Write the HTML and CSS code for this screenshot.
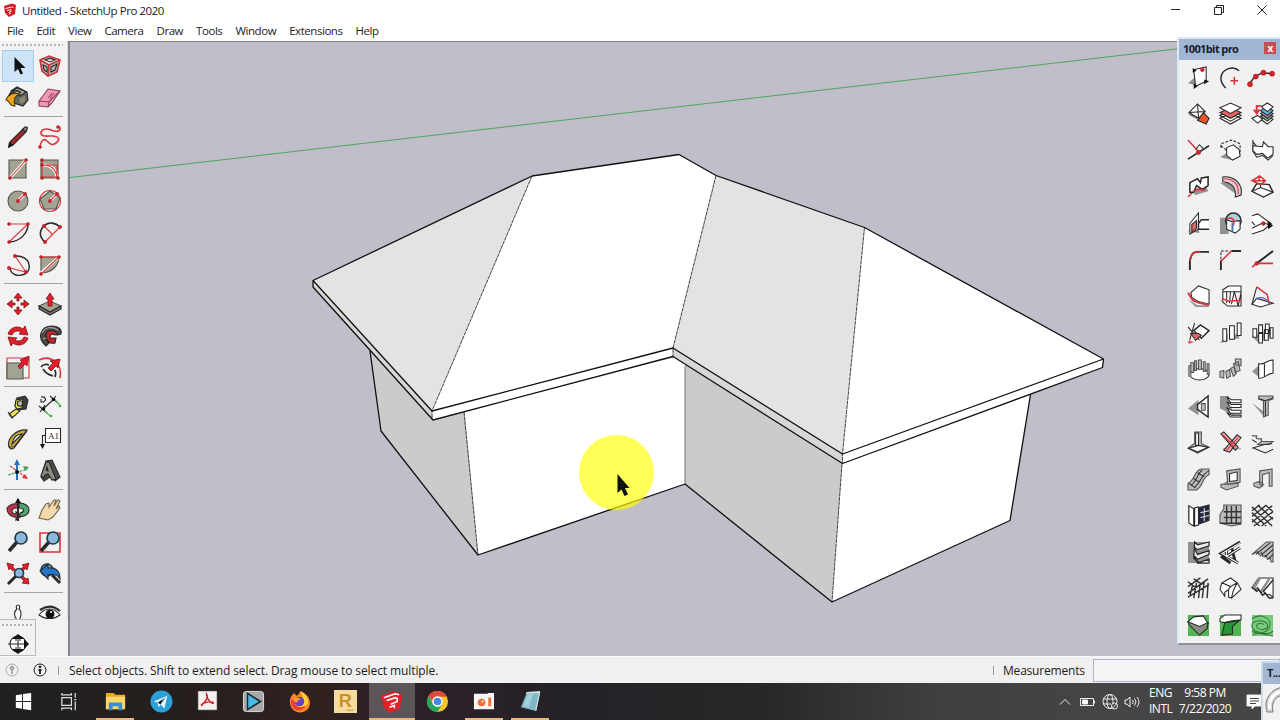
FILE: index.html
```html
<!DOCTYPE html>
<html lang="en">

<head>
  <meta charset="UTF-8">
  <meta name="viewport" content="width=device-width, initial-scale=1.0">
  <title>Untitled - SketchUp Pro 2020</title>
  <link rel="stylesheet" href="styles.css">
</head>

<body>
  <header class="titlebar">
    <svg class="app-logo" viewBox="0 0 14 14"><path fill="#d9161c" d="M1 3L9 .5 13 2l-1 9-6 3-4-4z"/><path fill="none" stroke="#fff" d="M2.500 5.500l6-1.500 2 .5M4 7.500l4-1v2L5.500 9.500M6 11l2-.7"/></svg>
    <span class="title">Untitled - SketchUp Pro 2020</span>
    <div class="window-buttons">
      <svg viewBox="0 0 12 12"><path d="M1 5.500h9"/></svg>
      <svg viewBox="0 0 12 12"><path d="M1.500 3.500h7v7h-7zM3.500 3.500v-2h7v7h-2"/></svg>
      <svg viewBox="0 0 12 12"><path d="M1.500 1.500l9 9M10.500 1.500l-9 9"/></svg>
    </div>
  </header>

  <nav class="menubar">
    <span>File</span>
    <span>Edit</span>
    <span>View</span>
    <span>Camera</span>
    <span>Draw</span>
    <span>Tools</span>
    <span>Window</span>
    <span>Extensions</span>
    <span>Help</span>
  </nav>

  <main class="workspace">
    <aside class="sidebar">
      <div class="toolbar">
        <div class="grip"></div>
        <div class="tools">
          <div class="tool selected"><svg viewBox="0 0 24 24"><path class="solid" d="M8.500 3v15l3.500-3 2.500 5.500 2.500-1-2.500-5.500h5z"/></svg></div>
          <div class="tool"><svg viewBox="0 0 24 24"><path fill="#b9b2ae" stroke="#c8343c" stroke-width="1.600" d="M2 6l9-4 11 4-3 12-9 4-6-5zM2 6l9 5 11-5M11 11l-1 11"/><path d="M7 6l5-2 5 2-5 2zM5 11l4 2v5l-3-2zM13 13l6-3-2 6-4 2z"/></svg></div>
          <div class="tool"><svg viewBox="0 0 24 24"><path fill="#5d6964" d="M5 5l6-4 10 5 1 8-5 6-9-3z"/><path fill="#aeb7ae" d="M6 5l5-3 9 4-6 4z"/><path fill="#98866c" stroke="none" d="M13 13l6-3v5l-4 3z"/><path fill="#f0a51c" stroke="#4a3a14" d="M0 14C2 8 8 6 14 8c-6 2-7 6-5 12C3 21 4 14 0 14z"/><path stroke-width="1.600" d="M3 10c2-6 8-7 12-3"/></svg></div>
          <div class="tool"><svg viewBox="0 0 24 24"><path fill="#f09ab5" stroke="#8a4058" d="M1 15L10 3l12 2-8 12-4 4-9-1z"/><path stroke="#8a4058" d="M1 15l10 1L22 5M11 16l-1 5"/><path stroke="#b3436c" d="M10 12l4-5M12 13l4-6"/></svg></div>
        </div>
        <hr>
        <div class="tools">
          <div class="tool"><svg viewBox="0 0 24 24"><path fill="#a9232a" d="M4 17L17 4l4-1-1 4L7 20l-4 2z"/><path class="solid" d="M3 17l4 3-5 3z"/><path fill="#888" d="M17 4l2-2h2v3l-2 2z"/></svg></div>
          <div class="tool"><svg viewBox="0 0 24 24"><path class="red thick" d="M2 22C3 15 6 13 9 16s5 5 9 2 4-6-3-7C8 11 3 12 3 8s6-5 10-3 9 2 9-1-1-2-2-2"/><circle class="dot" cx="2" cy="22" r="1.500"/><circle class="dot" cx="20" cy="2" r="1.500"/></svg></div>
          <div class="tool"><svg viewBox="0 0 24 24"><path class="olive" d="M3 3h17v18H3z"/><path class="halo" d="M4 21L20 3"/><path class="red" d="M4 21L20 3"/><circle class="dot" cx="4" cy="21" r="1.500"/><circle class="dot" cx="20" cy="3" r="1.500"/></svg></div>
          <div class="tool"><svg viewBox="0 0 24 24"><path class="olive" d="M3 3h17v18H3z"/><path class="halo" d="M4 8c10 0 14 5 15 12"/><path class="red" d="M4 3v17h16M4 8c10 0 14 5 15 12V8H4"/><circle class="dot" cx="4" cy="3" r="1.500"/><circle class="dot" cx="4" cy="8" r="1.500"/><circle class="dot" cx="4" cy="21" r="1.500"/><circle class="dot" cx="20" cy="21" r="1.500"/></svg></div>
          <div class="tool"><svg viewBox="0 0 24 24"><circle class="olive" cx="12" cy="12" r="10"/><path class="halo" d="M12 12l7-7"/><path class="red" d="M12 12l7-7"/><circle class="dot" cx="12" cy="12" r="1.700"/><circle class="dot" cx="19" cy="5" r="1.700"/></svg></div>
          <div class="tool"><svg viewBox="0 0 24 24"><circle class="red" cx="12" cy="12" r="10.500"/><path class="olive" d="M2 10L12 2l10 7-4 11H6z"/><path class="halo" d="M12 12l7-7"/><path class="red" d="M12 12l7-7"/><circle class="dot" cx="12" cy="12" r="1.700"/><circle class="dot" cx="19" cy="5" r="1.700"/></svg></div>
          <div class="tool"><svg viewBox="0 0 24 24"><path stroke-width="1.400" d="M22 3c0 9-8 18-19 18"/><path class="red" d="M3 3h19L3 21"/><circle class="dot" cx="3" cy="3" r="1.500"/><circle class="dot" cx="22" cy="3" r="1.500"/><circle class="dot" cx="3" cy="21" r="1.500"/></svg></div>
          <div class="tool"><svg viewBox="0 0 24 24"><path stroke-width="1.600" d="M7 21C1 16 1 10 6 5s12-3 16 1"/><path class="red" d="M6 5l8 8M7 21L22 6"/><circle class="dot" cx="6" cy="5" r="1.700"/><circle class="dot" cx="22" cy="6" r="1.700"/><circle class="dot" cx="7" cy="21" r="1.700"/></svg></div>
          <div class="tool"><svg viewBox="0 0 24 24"><path stroke-width="1.400" d="M9 3c15-1 18 14 10 18-7 3-14 1-15-6"/><path class="red" d="M9 3l11 16-16-4"/><circle class="dot" cx="9" cy="3" r="1.700"/><circle class="dot" cx="20" cy="19" r="1.700"/><circle class="dot" cx="3" cy="15" r="1.700"/></svg></div>
          <div class="tool"><svg viewBox="0 0 24 24"><path class="olive" d="M3 4h18c0 8-7 16-18 16z"/><path class="halo" d="M3 20L21 4"/><path class="red" d="M3 4h18L3 21"/><circle class="dot" cx="3" cy="4" r="1.500"/><circle class="dot" cx="21" cy="4" r="1.500"/><circle class="dot" cx="3" cy="21" r="1.500"/></svg></div>
        </div>
        <hr>
        <div class="tools">
          <div class="tool"><svg viewBox="0 0 24 24"><path class="arrow" d="M12 1l4 5h-3v3h-2V6H8zM12 23l-4-5h3v-3h2v3h3zM1 12l5-4v3h3v2H6v3zM23 12l-5 4v-3h-3v-2h3V8z"/></svg></div>
          <div class="tool"><svg viewBox="0 0 24 24"><path class="olive" d="M1 14l11-5 11 5-11 6z"/><path fill="#77786b" d="M1 14v3l11 6 11-6v-3l-11 6z"/><path class="arrow" d="M12 1l4 6h-2v7h-4V7H8z"/></svg></div>
          <div class="tool"><svg viewBox="0 0 24 24"><path class="arrow" d="M2 10C4 3 12 1 17 5l2-3 3 9-9-1 2-2C11 6 8 7 6 11zM22 14c-2 7-10 9-15 5l-2 3-3-9 9 1-2 2c4 2 7 1 9-3z"/></svg></div>
          <div class="tool"><svg viewBox="0 0 24 24"><path fill="#4b4c49" d="M8 22C-2 13 3 2 14 2c7 0 10 4 9 8l-4 1c-1-4-5-5-9-3-4 3-3 8 1 11z"/><path fill="#c4232a" d="M8 13C7 8 11 5 17 7l3 3-3 1c-4-2-5 0-5 3l6 0-1 5c-5 1-8-2-9-6z"/><path stroke="#aaa" d="M4 9c3-6 10-7 16-3M5 15l3-1"/></svg></div>
          <div class="tool"><svg viewBox="0 0 24 24"><path class="red" d="M1 2h22v20H1z"/><path class="olive" d="M1 7h16v16H1z"/><path class="arrow" d="M12 10l4-4-2-2 9-4-2 10-2-2-5 5z"/></svg></div>
          <div class="tool"><svg viewBox="0 0 24 24"><path class="red thick" d="M1 4C13-2 25 8 22 22"/><path stroke-width="1.600" d="M3 11c2-3 6-3 8-2M17 14c1 2 1 4 0 7M5 13c3 5 6 6 10 7"/><path class="arrow" d="M10 12l5-5-3-2 10-2-2 9-2-2-5 5z"/></svg></div>
        </div>
        <hr>
        <div class="tools">
          <div class="tool"><svg viewBox="0 0 24 24"><path fill="#3d3e3b" d="M11 3l8-2 3 4-2 9-8 1-3-4z"/><path fill="#f2e44c" d="M10 5l7-1-1 9-5 1-2-3zM10 14l-7 5 3 4 8-7z"/><circle fill="#b9b9b9" cx="14" cy="8.500" r="2.700"/><path d="M2 17l5 6"/></svg></div>
          <div class="tool"><svg viewBox="0 0 24 24"><path d="M5 14L16 4M12 1l8 7M1 11l8 7M18 1l-5 6M7 10l-5 7M3 2c5-1 6 4 2 5M3 4v3h3"/><path stroke="#58b958" d="M16 4l6 6M5 14l7 7"/><circle class="solid" cx="15.500" cy="4.500" r="1.800"/><circle class="solid" cx="5.500" cy="14" r="1.800"/><circle class="green-dot" cx="22" cy="11" r="1.300"/><circle class="green-dot" cx="13" cy="21" r="1.300"/></svg></div>
          <div class="tool"><svg viewBox="0 0 24 24"><path fill="#c5aa37" fill-rule="evenodd" d="M3 20C0 11 11 2 21 3L8 20zm3-3l10-10C10 7 7 12 6 17z"/><path d="M3 20l2 2 3-1L21 4"/></svg></div>
          <div class="tool"><svg viewBox="0 0 24 24"><path fill="#fff" d="M7.500 1.500h15v14h-15z"/><path d="M7.500 8.500h-3v9"/><path class="solid" d="M2 17h5l-2.500 5z"/><text x="10" y="12">A1</text></svg></div>
          <div class="tool"><svg viewBox="0 0 24 24"><path stroke="#d43b35" stroke-dasharray="3 1" d="M4 7l17 12"/><path stroke="#42a557" stroke-dasharray="3 1" d="M2 16l20-6"/><path stroke="#2873b8" stroke-width="2" stroke-dasharray="8 2" d="M11 3v19"/><path fill="#2873b8" stroke="none" d="M8 6l3-6 3 6z"/><path fill="#42a557" stroke="none" d="M17 7l6 1-4 4z"/><path fill="#d43b35" stroke="none" d="M16 19l6 1-3-5z"/><circle class="solid" cx="11" cy="13" r="2"/></svg></div>
          <div class="tool"><svg viewBox="0 0 24 24"><path fill="#4c4d48" d="M3 18L8 2l6-1 8 17-5 4-4-5-4 3-3 2z"/><path fill="#8b8b81" fill-rule="evenodd" d="M3 17L8 3h3l7 17-4 1-4-6-3 1-1 3zM8 11l2 1-1-4z"/></svg></div>
        </div>
        <hr>
        <div class="tools">
          <div class="tool"><svg viewBox="0 0 24 24"><path fill="#bc3448" d="M1 10c3-4 6-5 11-4v4c-4 0-6 1-6 3s2 3 4 3v-2l5 4-5 4v-3C4 19 1 15 1 10z"/><path fill="#51a574" d="M13 5c6 0 10 3 10 7 0 3-3 6-9 7v-4c5-1 5-5-1-5z"/><path stroke-width="2" d="M12 1v22"/><path class="solid" d="M9 5l3-5 3 5z"/></svg></div>
          <div class="tool"><svg viewBox="0 0 24 24"><path fill="#f4d9aa" stroke="#75664b" d="M1 20l3-8 4-6 3-1 0 4 5-7 2 0-2 6 4-6 2 1-4 8 3-3 1 2-7 9-5 3z"/></svg></div>
          <div class="tool"><svg viewBox="0 0 24 24"><path stroke-width="3.500" d="M3 21l8-9"/><circle class="lens" cx="15" cy="8" r="6"/></svg></div>
          <div class="tool"><svg viewBox="0 0 24 24"><path class="red thick" d="M2 3h20v19H2z"/><path stroke-width="3.500" d="M3 21l8-9"/><circle class="lens" cx="15" cy="8" r="6"/></svg></div>
          <div class="tool"><svg viewBox="0 0 24 24"><path class="arrow" d="M1 1l7 2-2 1 3 3-2 2-3-3-1 2zM23 1l-7 2 2 1-3 3 2 2 3-3 1 2zM23 22l-7-1 2-2-3-3 2-2 3 3 2-1z"/><path stroke-width="3" d="M2 22l8-8"/><circle class="lens" cx="13" cy="11" r="4.500"/></svg></div>
          <div class="tool"><svg viewBox="0 0 24 24"><circle class="lens" cx="9" cy="8" r="6"/><path stroke-width="3" d="M14 13l8 8"/><path fill="#2477c8" d="M2 9l8-7v4c8-1 12 3 12 11-3-5-7-5-12-4v4z"/></svg></div>
        </div>
        <hr>
        <div class="tools">
          <div class="tool"><svg viewBox="0 0 24 24"><path fill="#fff" d="M12 4c2 0 2 3 1 4 3 2 2 7 1 9v5h-4v-5c-2-2-2-7 1-9-1-1-1-4 1-4z"/></svg></div>
          <div class="tool"><svg viewBox="0 0 24 24"><path fill="#fff" d="M1 14c6-8 15-8 21 0-7 5-14 5-21 0z"/><circle class="solid" cx="12" cy="13" r="4.500"/><path stroke-width="2.200" d="M2 9c7-5 13-5 20 1"/><circle fill="#fff" stroke="none" cx="13" cy="11" r="1"/></svg></div>
        </div>
      </div>
      <div class="toolbar section-toolbar">
        <div class="grip"></div>
        <div class="tool"><svg viewBox="0 0 24 24"><circle fill="#fff" cx="12" cy="12" r="8"/><path d="M2 12h20M12 4v16M9 8h2M13 8h2M9 16h2M13 16h2"/><path class="solid" d="M12 2l6 5H6zM12 22l6-5H6zM18 7l5 5-5 5z"/></svg></div>
      </div>
    </aside>

    <section class="viewport">
      <svg class="model" viewBox="70 42 1210 614">
        <path class="axis" d="M70 177.500L1180 48.500"/>
        <!-- walls -->
        <path class="wall-dark" d="M370 351l11 80 97 124-14-143-32 2z"/>
        <path class="face" d="M464 405l14 150 207-71V355z"/>
        <path class="wall-dark" d="M685 360v124l147 118 10.500-142z"/>
        <path class="face" d="M842.500 460L832 602l178-81.500 20.500-126z"/>
        <!-- roof -->
        <path class="roof-dark" d="M313 280.500L532 176 432 411z"/>
        <path class="face" d="M532 176l147-21.500 37 21L673 348 432 411z"/>
        <path class="roof-dark" d="M716 175.500l148.500 52-22 226.500L673 348z"/>
        <path class="face" d="M864.500 227.500L1103.500 359l-261 95z"/>
        <!-- fascia -->
        <path class="fascia" d="M313 280.500v6L433 420l-1-9z"/>
        <path class="face" d="M432 411l241-63v8.500L433 420z"/>
        <path class="fascia" d="M673 348v8.500l169.500 107V454z"/>
        <path class="face" d="M842.500 454l261-95-1 8.500-260 96z"/>
        <path class="thin" d="M532 176L432 411v8M716 175.500L673 348v8M864.500 227.500l-22 226.500v9M464 412l14 143M842 464l-10 138"/>
        <path class="corner" d="M685 366v118"/>
        <path class="edge" d="M313 280.500L532 176l147-21.500 37 21 148.500 52L1103.500 359l-1 8.500-260 96L673 356.500 433 420 313 287zL432 411l241-63 169.500 106 261-95M370 351l11 80 97 124 207-71 147 118 178-81.500 20.500-126"/>
        <!-- pointer highlight -->
        <circle class="highlight" cx="616.500" cy="472.500" r="37.500"/>
        <path class="pointer" d="M617.500 474v19l4-3.500 3 6.500 3.500-1.500-3-6.500h4.500z"/>
      </svg>
    </section>
  </main>

  <footer class="statusbar">
    <svg class="status-icon muted" viewBox="0 0 14 14"><circle cx="7" cy="7" r="6"/><path d="M7 11V7" stroke-width="2"/><circle class="status-fill" cx="7" cy="5" r="2"/></svg>
    <svg class="status-icon" viewBox="0 0 14 14"><circle cx="7" cy="7" r="6"/><path d="M7 11V6M5.500 7h3" stroke-width="1.800"/><circle class="status-fill" cx="7" cy="3.800" r="1"/></svg>
    <span class="divider"></span>
    <span class="hint">Select objects. Shift to extend select. Drag mouse to select multiple.</span>
    <span class="divider"></span>
    <span class="measure-label">Measurements</span>
    <div class="measure-box"></div>
  </footer>

  <div class="taskbar">
    <div class="task"><svg viewBox="0 0 24 24"><path fill="#fff" d="M4 5.500l6.500-1v7H4zM11.500 4.300L20 3v8.500h-8.500zM4 12.500h6.500v7l-6.500-1zM11.500 12.500H20V21l-8.500-1.300z"/></svg></div>
    <div class="task"><svg viewBox="0 0 24 24"><path fill="none" stroke="#ddd" stroke-width="1.300" d="M4 8h10v8H4zM4 3v2h10V3M4 21v-2h10v2M18 3v5M18 12v9M17 10h2"/></svg></div>
    <div class="task open"><svg viewBox="0 0 24 24"><path fill="#e9a829" d="M2 3h8l2 2h10v15H2z"/><path fill="#ffd667" d="M2 7h20v13H2z"/><path fill="#3b8fce" d="M5 13h14v8h-4v-4H9v4H5z"/></svg></div>
    <div class="task"><svg viewBox="0 0 24 24"><circle fill="#2a9fd8" cx="12" cy="12" r="11.500"/><path fill="#fff" d="M4 12l14-6-3 13-4-4-2 3-1-5z"/><path stroke="#7bb5d6" d="M8 13l8-5-5 7"/></svg></div>
    <div class="task"><svg viewBox="0 0 24 24"><path fill="#f3f0ef" stroke="#ccc" d="M2.500 1.500h19v19h-19z"/><path fill="none" stroke="#c62128" stroke-width="1.500" d="M11 4c3 4-2 9-5 12-2-1 6-5 12-3 1 3-7-2-7-9z"/></svg></div>
    <div class="task"><svg viewBox="0 0 24 24"><rect fill="#a6a8aa" stroke="#ddd" x="1.500" y="1.500" width="21" height="21" rx="3"/><path fill="#20282c" d="M5 2l16 10L5 22z"/><path fill="#49bbea" d="M6.500 5l11 7-11 7z"/></svg></div>
    <div class="task"><svg viewBox="0 0 24 24"><path fill="#ff8427" d="M2 12c0-5 3-7 4-9l3 3c2-1 3-3 4-5 7 4 9 6 10 12 0 14-21 14-21-1z"/><path fill="#ffd33b" d="M13 1c7 4 8 8 8 13-3 5-8 4-11 3 6-1 8-7 3-16z"/><path fill="#e93a4b" d="M3 10c2 0 3 1 4 3 1 6 8 6 11 3-2 8-15 8-15-6z"/><circle fill="#6645bd" cx="12" cy="12" r="5"/><path fill="#ff9b29" d="M6 9c4-2 7 0 7 1-2 1-3 0-3 3-3 0-4-2-4-4z"/></svg></div>
    <div class="task"><svg viewBox="0 0 24 24"><path fill="#f5dda0" d="M0 0h24v24H0z"/><text class="revit" x="5" y="18">R</text><path stroke="#c79126" stroke-width="1.500" stroke-dasharray="2 .7" d="M13 21h7"/></svg></div>
    <div class="task open active"><svg viewBox="0 0 24 24"><path fill="#e12027" d="M1 6l14-5 8 4-2 14-11 5-6-6z"/><path fill="none" stroke="#fff" stroke-width="1.700" d="M4 8l12-4 4 1M7 11l9-3 2 1v3l-7 3M10 18l5-2v3"/></svg></div>
    <div class="task"><svg viewBox="0 0 24 24"><circle fill="#f4c62b" cx="12" cy="12" r="11"/><path fill="#dd4b3e" d="M2.500 6.500a11 11 0 0 1 19.200.5H12a5 5 0 0 0-5 5z"/><path fill="#25a55c" d="M2.500 6.500A11 11 0 0 0 12 23l5-8.500c-4 5-9 2-10-1z"/><circle fill="#4388ef" stroke="#fff" stroke-width="1.500" cx="12" cy="12" r="4.700"/></svg></div>
    <div class="task open"><svg viewBox="0 0 24 24"><path fill="#f6f6f4" d="M2 4h14l1-1h6v17H2z"/><circle fill="#ea7135" cx="10" cy="13" r="4"/><path fill="#ea7135" d="M17 8h3v9h-3z"/><circle fill="#fff" cx="11" cy="12" r="1"/></svg></div>
    <div class="task open"><svg viewBox="0 0 24 24"><path fill="#7fb9c8" d="M8 3l14-1-4 20-16-4z"/><path fill="#d2e3e3" d="M21 2l1 1-4 19-1-1zM8 2l14-1v2L7 4z"/><path fill="#a3d0da" d="M9 5l6-1-5 14-6-1z"/></svg></div>
    <div class="tray">
      <svg viewBox="0 0 16 16"><path d="M2 10.500l5-5 5 5"/></svg>
      <svg viewBox="0 0 16 16"><path d="M.5 4.500h13v7H.5zM14.500 6.500v3"/><path class="tray-fill" d="M2.500 6h5v4h-5z"/></svg>
      <svg viewBox="0 0 16 16"><circle cx="8" cy="7.500" r="7"/><ellipse cx="8" cy="7.500" rx="3" ry="7"/><path d="M1 5h14M1 10h8"/><circle fill="#444" cx="12.500" cy="12" r="3"/><path d="M10.500 14l4-4"/></svg>
      <svg viewBox="0 0 16 16"><path d="M1 6v4h2l3 3V3L3 6zM8.500 6q1.500 2 0 4M10.500 4.500q3 3.500 0 7M13 3q4 5 0 10"/></svg>
      <div class="language">ENG<br>INTL</div>
      <div class="clock">9:58 PM<br>7/22/2020</div>
      <svg class="notify" viewBox="0 0 16 16"><path class="tray-fill" d="M1 1h14v11H9l-3 3v-3H1z"/><path stroke="#444" d="M4 4.500h9M4 7h9M4 9.500h6"/></svg>
    </div>
  </div>

  <!-- floating 1001bit palette -->
  <div class="palette">
    <div class="palette-title">1001bit pro <span class="close">x</span></div>
    <div class="palette-grid">
      <svg viewBox="0 0 24 24"><path class="shade" d="M1 18l8-7v9z"/><path class="white" d="M7 4l13-3v15L9 21z"/><path class="solid" d="M7 18l4 3-4 3zM18 14l5 2-5 3zM6 2l4 3-4 2z"/><circle class="dot" cx="16" cy="4" r="2"/></svg>
      <svg viewBox="0 0 24 24"><path stroke-width="1.500" d="M21 5C15-1 2 3 2 13c0 4 2 7 5 10"/><path class="red thick" d="M12 15.500h8M16 11.500v8"/></svg>
      <svg viewBox="0 0 24 24"><path stroke-width="1.500" d="M-2 19L4 11l8-4 10 1"/><circle class="dot" cx="-1" cy="19" r="2.700"/><circle class="dot" cx="5" cy="11" r="2.700"/><circle class="dot" cx="13" cy="7" r="2.700"/><circle class="dot" cx="22" cy="8" r="2.700"/></svg>

      <svg viewBox="0 0 24 24"><path class="shade" d="M1 13l10-2 3 9z"/><path class="white" d="M2 11l9-9 8 8-7 7zM2 11l17-1M11 2l1 15"/><path class="orange" d="M13 17l4-6 6 6-3 6-9-4z"/></svg>
      <svg viewBox="0 0 24 24"><path class="white" d="M1 17l11 6 11-6-11-5zM1 14l11 6 11-6-11-5z"/><path class="redfill" d="M1 11l11 6 11-6-11-5z"/><path class="white" d="M1 6l11-5 11 5-11 6z"/></svg>
      <svg viewBox="0 0 24 24"><path class="white" d="M10 18l7 5 6-5-7-4z"/><path fill="#7db36b" d="M10 15l7 5 6-5-7-4z"/><path fill="#b782c7" d="M10 12l7 5 6-5-7-4z"/><path fill="#5ab8d0" d="M10 9l7 5 6-5-7-4z"/><path class="white" d="M11 5l6-4 6 4-6 5zM1 17l6-3 5 4-5 4z"/><path class="red heavy" d="M11 4H6v7M3 8l3 4 3-4"/></svg>

      <svg viewBox="0 0 24 24"><path class="red thick" d="M1 1l11 12"/><path stroke-width="1.700" d="M1 21L23 7"/><path d="M9 11l4-5 4 4"/><circle class="dot" cx="12" cy="14" r="2.300"/></svg>
      <svg viewBox="0 0 24 24"><path class="shade" d="M1 19l8-5 5 8z"/><path class="dash" d="M2 9V5l11-4 9 4v11M2 7l6 5"/><path class="white" d="M8 9l7-3 6 5 1 7-8 4-6-5z"/></svg>
      <svg viewBox="0 0 24 24"><path d="M2 1v12l4 6 6-2 6 5 5-5M2 3l4 5"/><path class="white" d="M2 7l10 1 1-5 5 5h5v8l-6 4-5-5-6 1-4-4z"/></svg>

      <svg viewBox="0 0 24 24"><path class="red thick" d="M1 23l5-5"/><path class="shade" d="M7 15l13-4 2 6-14 4z"/><path class="white" stroke-width="1.600" d="M3 8l8-4 3 4 1-5 7-1v9l-6 4-6-4-3 7H3z"/><path class="red thick" d="M6 17l7-2 6 1"/></svg>
      <svg viewBox="0 0 24 24"><path class="shade" d="M1 8h13l4 12z"/><path fill="#e4cbd7" d="M4 2c13-1 21 8 19 19l-6 2C18 13 14 8 4 7z"/><path class="red" d="M5 4c11 0 16 6 15 16"/></svg>
      <svg viewBox="0 0 24 24"><path class="white" stroke-width="1.500" d="M1 17L6 9l13 1 4 8-10 5z"/><path d="M1 17l9-4 13 5M10 9v4"/><path class="red thick" d="M1 6l8-5 6 5-5 4zM9 1l-1 6M1 6l14 0"/></svg>

      <svg viewBox="0 0 24 24"><path class="shade" d="M1 20l10-7 2 9z"/><path class="white" d="M3 12L12 1v17l-9 5z"/><path class="redfill" d="M5 13l5-4v8l-5 4z"/><path class="white" stroke-width="1.500" d="M23 8h-8l-3 4v6h11"/></svg>
      <svg viewBox="0 0 24 24"><path class="shade" d="M1 6h9v17H1z"/><circle fill="#b7cfdc" stroke-width="1.600" cx="15" cy="9" r="8"/><path class="white" d="M13 10l9-1v9l-5 4-9-4V8z"/><path class="red thick" d="M8 7c6-2 9 1 7 7"/><path stroke="#4972ae" stroke-width="2" d="M14 11v10"/></svg>
      <svg viewBox="0 0 24 24"><path class="white" d="M1 4l6-2 14 10-8 7-12 4"/><path d="M1 17l12-6 9 4M1 10l3 4"/><circle class="dot" cx="13" cy="12" r="2"/><path class="solid" d="M17 9l6 5-5 4z"/></svg>

      <svg viewBox="0 0 24 24"><path class="heavy" d="M3 22v-9C4 5 7 2 14 3h9"/><path class="red thick" d="M3 13C4 5 7 2 14 3"/></svg>
      <svg viewBox="0 0 24 24"><path class="heavy" d="M2 22V12M13 2h10"/><path class="red thick" d="M2 13L13 2"/><path class="dash" d="M2 11V2h9"/></svg>
      <svg viewBox="0 0 24 24"><path class="heavy" d="M6 15L23 2"/><path class="red thick" d="M1 19l5-4h17"/><circle class="dot" cx="6" cy="15" r="2"/></svg>

      <svg viewBox="0 0 24 24"><path class="shade" d="M1 15l10 6h12v2H9z"/><path class="white" d="M4 8l8-7 11 4v15l-12-3-6-4z"/><path class="red heavy" d="M1 8l5 8c4 3 10 3 17 5"/></svg>
      <svg viewBox="0 0 24 24"><path class="shade" d="M1 16h10v6z"/><path class="white" d="M4 5l6-4h13v21H9l-5-4zM4 7h19M8 7v12M12 7l-1 12M16 7l-3 13M16 7l4 15 3-14"/><path class="red thick" d="M3 14l7 3 13-1"/></svg>
      <svg viewBox="0 0 24 24"><path class="white" d="M1 20l5-6 17 5-13 4z"/><path d="M6 2L1 20"/><path class="red thick" d="M6 2l11 8 2 10"/><path stroke="#5362ce" d="M5 14c6-2 11 0 14 5"/></svg>

      <svg viewBox="0 0 24 24"><path d="M8 1L3 18M1 5l12 14"/><path class="white" stroke-width="1.500" d="M7 9l7-6 9 6-8 8z"/><path class="redfill" d="M4 12h8l3 2-6 5z"/><path class="red" d="M1 21h5M3 18v5"/></svg>
      <svg viewBox="0 0 24 24"><path class="shade" d="M1 22l8-10v8zM10 19l11-9v7z"/><path class="white" d="M4 7h4v13H4zM11 4h5v14h-5zM19 1h4v13h-4z"/></svg>
      <svg viewBox="0 0 24 24"><path class="shade" d="M1 15l22-8v7L8 22z"/><path class="white" d="M2 7h4v9H2zM8 3h4v9H8zM15 2h4v10h-4zM8 11h4v11H8zM14 8h4v11h-4zM20 6h3v11h-3z"/></svg>

      <svg viewBox="0 0 24 24"><ellipse class="white" cx="13" cy="17" rx="10" ry="6"/><path class="gray" d="M2 8h2v11H2zM4 5h3v10H4zM8 3h2v10H8zM12 2h3v10h-3zM17 4h2v10h-2zM21 6h2v11h-2z"/><path class="shade" d="M1 11l4 10-4-3z"/></svg>
      <svg viewBox="0 0 24 24"><path class="gray" d="M1 14l4-1v8l-4-1zM7 14l4-2 1 7-4 2zM12 11l4-2 2 7-3 3zM15 6l5-2 2 9-5 2zM17 1h6v7l-6-1z"/></svg>
      <svg viewBox="0 0 24 24"><path class="shade" d="M1 14l9-8v15z"/><path class="white" d="M8 6c6 2 8-4 15-4v14c-7 0-8 6-15 5zM14 6v14"/></svg>

      <svg viewBox="0 0 24 24"><path class="shade" d="M1 14L12 5v16z"/><path class="white" stroke-width="1.500" d="M11 10l11-9v22l-11-8z"/><path class="gray" d="M15 9h4v7h-4z"/></svg>
      <svg viewBox="0 0 24 24"><path class="shade" d="M1 1h9l5 20-14-7z"/><path class="white" d="M8 2l5 3h10v3H12zM8 7l5 3h10v3H12zM8 13l5 3h10v3H12zM8 18l5 3h10v2H12z"/></svg>
      <svg viewBox="0 0 24 24"><path class="shade" d="M1 8l13 10v5z"/><path class="gray" d="M8 1h15v3l-5 2v15l-5 2V6L8 4z"/><path d="M15 6v16M8 4l7 2 8-3"/></svg>

      <svg viewBox="0 0 24 24"><path class="shade" d="M1 17l9-3v5z"/><path class="gray" d="M8 1h7v12l8 4-12 6-10-5 7-5z"/><path class="white" d="M9 2h3v13H9zM2 18l10-3 10 2-11 5z"/></svg>
      <svg viewBox="0 0 24 24"><path class="shade" d="M4 18h19v1H4z"/><path fill="#efaaae" d="M2 3l3-2 15 16-3 3zM19 4l4 3-12 15-6-2z"/><path class="red" d="M4 4l13 13M20 7L8 20"/></svg>
      <svg viewBox="0 0 24 24"><path class="gray" d="M1 5h5v3h5v3h12l-4 3H7l4-3"/><path d="M1 18l13-4 8-1M3 18l12 5 8-4M1 9l5 3"/></svg>

      <svg viewBox="0 0 24 24"><path class="gray" d="M1 16C8 14 8 1 15 1h8v6c-7 2-6 12-13 16H1z"/><path d="M4 18c7-4 6-12 12-16M8 20c7-5 7-14 15-17M2 16l7 5M7 11l6 4M11 5l7 4"/></svg>
      <svg viewBox="0 0 24 24"><path class="shade" d="M2 18l7-5 6 3-5 5z"/><path class="gray" d="M8 3l14-2v14L9 17z"/><path class="white" d="M11 6l8-2v9l-8 1z"/><path class="gray" d="M2 17h9l9-1v3l-12 4-6-3z"/></svg>
      <svg viewBox="0 0 24 24"><path class="gray" d="M3 16l6-2 4 3-4 4-6-2zM9 3l13-2v18h-3V5l-7 2v12l-3-2z"/></svg>

      <svg viewBox="0 0 24 24"><path class="shade" d="M1 1l8 4v15l-8-3z"/><path class="white" d="M2 2l5 3v18l-5-3zM8 4l4-1v19l-4 1z"/><path class="navy" d="M12 4l11-3v16l-11 4z"/><path stroke="#ddd" d="M14 9l9-2M14 14l9-2M18 4v14"/></svg>
      <svg viewBox="0 0 24 24"><path class="gray" d="M1 11l4-6V1h18v20l-10 2-12-3z"/><path class="mesh" d="M8 2v17M13 2v18M18 2v18M5 8h18M5 14h18M1 20h22"/></svg>
      <svg viewBox="0 0 24 24"><path class="mesh" d="M1 7l8-6M1 13L15 2M1 19L22 2M3 23l20-15M11 23l12-9M1 3l21 20M7 1l16 15M1 9l15 14M15 1l8 7M1 16l8 7"/></svg>

      <svg viewBox="0 0 24 24"><path class="shade" d="M1 1h22v22H1z"/><path fill="#eee" stroke-width="1.300" d="M8 1l3 3 12-3v4l-12 4-4-3 4 8 12-4v4l-12 5-4-4 4 8 12-4V23H13L7 18z"/></svg>
      <svg viewBox="0 0 24 24"><path stroke-width="3" d="M22 1L2 13l18 10M8 9v7l14-9M13 6l4 16M2 16l10 7"/><path stroke="#fff" d="M22 2L3 13l17 10M8 10v6l14-9"/></svg>
      <svg viewBox="0 0 24 24"><path class="gray" d="M1 14L16 1h7v21h-2l-1-4-3 1-1-4-4 1-1-4-3 2-1-3z"/><path d="M5 14L20 2M9 16L23 4M14 17l9-8M18 19l5-5"/></svg>

      <svg viewBox="0 0 24 24"><path class="mesh" d="M1 10L14 1M1 17L22 2M6 8L3 20M10 6L7 22M14 6l-2 16M18 4l-2 18M22 6l-1 16M1 5l8 6M7 2l9 6M1 21L23 8"/></svg>
      <svg viewBox="0 0 24 24"><path class="white" d="M1 13l2-7 9-5 7 5 4 7-10 9-3-1v-8l-4 3v4zM3 6l9 4 7-4M12 10l-2 3M19 6l-4 8-2 8"/></svg>
      <svg viewBox="0 0 24 24"><path class="white" d="M1 11L8 1h15v20l-4-3-2 1-4-4-3 1-3-5-2 2z"/><path class="shade" d="M1 11l3 2 7-12H8zM9 15l3 1L21 1h-3z"/><path stroke-width="1.500" d="M1 11l5 4 2-2 4 6 3-2 4 5h4M13 15L23 3"/></svg>

      <svg viewBox="0 0 24 24"><path class="green" d="M1 1h22v22H1z"/><path class="white" d="M1 8l6-5 10-1 5 8-9 7z"/><path fill="#858d80" d="M1 8l12 5 9-4-1 6-8 7L2 11z"/></svg>
      <svg viewBox="0 0 24 24"><path class="green" d="M1 1h22v22H1z"/><path class="white" d="M1 5l5-4h17v5l-9 1-8 2-5-1z"/><path class="dark-green" d="M6 9l15-2-7 6v8l-11 1z"/></svg>
      <svg viewBox="0 0 24 24"><path class="light-green" d="M1 1h22v22H1z"/><path class="contour" d="M1 5c10-7 22 0 18 9s-17 5-18-1 8-7 13-5 4 7 0 8-9-1-8-4 5-3 7-1M2 22c7-5 14 2 21-4M1 18c7 3 14 3 22 5"/></svg>
    </div>
  </div>

  <div class="palette mini-palette">
    <div class="palette-title">T...</div>
    <svg viewBox="0 0 20 30"><path fill="#d5d5d5" stroke="#777" d="M4 28C0 15 8 5 20 3v8c-8 1-12 8-10 17z"/><path fill="none" stroke="#fff" stroke-width="3" d="M7 25C5 16 11 8 20 7"/></svg>
  </div>
</body>

</html>
```
FILE: styles.css
```css
* {
  box-sizing: border-box;
}

body {
  display: flex;
  flex-direction: column;
  width: 1280px;
  height: 720px;
  margin: 0;
  overflow: hidden;
  background: #fff;
  color: #1c1c1c;
  font-family: "Open Sans", "Noto Sans", sans-serif;
  font-size: 12px;
  position: relative;
}

svg {
  display: block;
  flex: none;
}

/* Title and menus */

.titlebar {
  display: flex;
  align-items: center;
  height: 20px;
  padding-left: 3px;
}

.app-logo {
  width: 14px;
  height: 14px;
  margin-right: 5px;
}

.title {
  font-size: 11.5px;
  letter-spacing: -0.44px;
}

.window-buttons {
  display: flex;
  gap: 31px;
  margin-left: auto;
  padding-right: 12px;
}

.window-buttons svg {
  width: 12px;
  height: 12px;
  fill: none;
  stroke: #222;
}

.menubar {
  display: flex;
  align-items: center;
  gap: 13px;
  height: 21px;
  padding-left: 7px;
  font-size: 11.5px;
  letter-spacing: -0.45px;
}

/* Tool icons */

.workspace {
  display: flex;
  height: 615px;
}

.sidebar {
  width: 68px;
  background: #f2f2f2;
}

.toolbar {
  height: 578px;
  padding: 3px 4px 0 2px;
  overflow: hidden;
  border-right: 1px solid #ddd;
}

.grip {
  height: 2px;
  margin-bottom: 4px;
  background: repeating-linear-gradient(90deg, #b5b5b5 0 2px, transparent 2px 4px);
}

.tools {
  display: grid;
  grid-template-columns: 32px 32px;
  grid-auto-rows: 32px;
}

.toolbar hr {
  height: 1px;
  margin: 2px 0 4px 2px;
  border: 0;
  background: #a4a4a4;
}

.tool {
  display: flex;
  align-items: center;
  justify-content: center;
}

.selected {
  border: 1px solid #a8cdec;
  background: #cde3f6;
}

.tool svg,
.palette-grid svg {
  width: 24px;
  height: 24px;
  overflow: visible;
  fill: none;
  stroke: #292929;
  stroke-width: 1.1;
}

.tool text {
  fill: #222;
  stroke: none;
  font: 9px "Liberation Serif", serif;
}

.section-toolbar {
  width: 36px;
  height: 37px;
  padding: 4px 2px 0;
  border: 1px solid #bbb;
  border-left: 0;
}

.section-toolbar .grip {
  margin-bottom: 6px;
}

svg .red {
  fill: none;
  stroke: #dc343a;
}

svg .thick {
  stroke-width: 1.6;
}

svg .heavy {
  stroke-width: 2;
}

svg .halo {
  stroke: #fff;
  stroke-width: 3;
}

svg .dot {
  fill: #d8202b;
  stroke: #9a2228;
  stroke-width: 0.5;
}

svg .green-dot {
  fill: #3fae49;
  stroke: none;
}

svg .solid {
  fill: #111;
  stroke: none;
}

svg .olive {
  fill: #a3a393;
  stroke: #55564c;
}

svg .arrow {
  fill: #e21f29;
  stroke: #76151a;
  stroke-width: 0.8;
}

svg .lens {
  fill: #8bb9dc;
  stroke: #293a48;
  stroke-width: 1.7;
}

svg .white {
  fill: #fff;
}

svg .gray {
  fill: #bcbcbc;
  stroke: #555;
}

svg .shade {
  fill: #929292;
  stroke: none;
}

svg .redfill {
  fill: #e56567;
}

svg .orange {
  fill: #f05529;
}

svg .navy {
  fill: #22263e;
}

svg .mesh {
  stroke: #333;
  stroke-width: 1.5;
}

svg .dash {
  stroke-dasharray: 3 1.5;
}

svg .green {
  fill: #51b552;
  stroke: none;
}

svg .dark-green {
  fill: #259638;
}

svg .light-green {
  fill: #79cc7c;
  stroke: none;
}

svg .contour {
  stroke: #327a3a;
}

/* Drawing area */

.viewport {
  flex: 1;
  border-top: 1px solid #818186;
  border-left: 2px solid #858587;
  background: #c0bec8;
}

.model {
  width: 1210px;
  height: 614px;
}

.axis {
  stroke: #4da65c;
}

.face {
  fill: #fff;
}

.roof-dark {
  fill: #e3e3e3;
}

.wall-dark {
  fill: #cbcbcb;
}

.fascia {
  fill: #d7d7d5;
}

.edge {
  fill: none;
  stroke: #111;
  stroke-width: 1.3;
  stroke-linejoin: round;
}

.thin {
  fill: none;
  stroke: #333;
  stroke-width: 0.9;
  stroke-dasharray: 4 0.7;
}

.corner {
  stroke: #777;
}

.highlight {
  fill: #ffff00;
  opacity: 0.66;
}

.pointer {
  fill: #111;
}

/* Status bar */

.statusbar {
  display: flex;
  align-items: center;
  height: 27px;
  padding-left: 5px;
  border-top: 1px solid #fafafa;
  background: #f0f0f0;
}

.status-icon {
  width: 14px;
  height: 14px;
  margin-right: 14px;
  fill: none;
  stroke: #222;
}

.status-icon .status-fill {
  fill: #222;
}

.status-icon.muted {
  stroke: #aaa;
}

.muted .status-fill {
  fill: #aaa;
}

.divider {
  width: 1px;
  height: 9px;
  margin-left: -3px;
  background: #999;
}

.hint {
  width: 927px;
  margin-left: 10px;
  letter-spacing: -0.1px;
  white-space: nowrap;
}

.measure-label {
  width: 90px;
  margin-left: 9px;
  letter-spacing: -0.2px;
}

.measure-box {
  flex: 1;
  height: 23px;
  border: 1px solid #a9b5c7;
  background: #f4f4f4;
}

/* Taskbar */

.taskbar {
  display: flex;
  height: 37px;
  background: linear-gradient(90deg, #20211f 0, #251f1e 180px, #30211f 320px, #2c2028 430px, #232226 580px, #272729 760px, #3f3f40 930px, #454545 1100px);
}

.task {
  display: flex;
  align-items: center;
  justify-content: center;
  width: 46.1px;
}

.task svg {
  width: 23px;
  height: 23px;
}

.open {
  background: linear-gradient(#e8b879, #e8b879) center bottom / 38px 2px no-repeat;
}

.active {
  background: linear-gradient(#e8b879, #e8b879) center bottom / 46px 2px no-repeat #5b5459;
}

.revit {
  fill: #ca9028;
  font: bold 19px "Liberation Sans", sans-serif;
}

.tray {
  display: flex;
  align-items: center;
  gap: 6px;
  margin-left: auto;
  padding-right: 18px;
  color: #fff;
  line-height: 16px;
  letter-spacing: -0.5px;
}

.tray svg {
  width: 16px;
  height: 16px;
  fill: none;
  stroke: #eee;
}

.tray .tray-fill {
  fill: #fff;
}

.language {
  width: 24px;
  margin: -2px 0 0 3px;
}

.clock {
  width: 56px;
  margin: -2px 2px 0 -2px;
  text-align: center;
}

.tray .notify {
  margin-left: 5px;
}

/* Floating palettes */

.palette {
  position: absolute;
  top: 37px;
  left: 1177px;
  width: 107px;
  height: 608px;
  border: 2px solid #dce8f5;
  border-bottom-color: #8b9299;
  background: #f1f1f1;
}

.palette-title {
  display: flex;
  align-items: center;
  height: 21px;
  padding: 0 0 2px 4px;
  background: #a0b6d2;
  color: #18202c;
  font-family: "Open Sans", sans-serif;
  font-size: 11px;
  font-weight: bold;
  letter-spacing: -0.6px;
}

.close {
  display: flex;
  align-items: center;
  justify-content: center;
  width: 12px;
  height: 12px;
  margin: -2px 6px 0 auto;
  background: #c84e52;
  color: #fff;
  font-size: 10px;
  line-height: 10px;
}

.palette-grid {
  display: grid;
  grid-template-columns: 32px 32px 32px;
  grid-template-rows: repeat(16, 36.55px);
  align-items: center;
  justify-items: center;
  width: 96px;
  padding-left: 3px;
  margin-top: -1px;
}

.palette-grid svg {
  width: 23px;
  height: 23px;
}

.mini-palette {
  top: 661px;
  left: 1261px;
  width: 60px;
  height: 90px;
  border-color: #c9dbef;
}

.mini-palette > svg {
  width: 20px;
  height: 30px;
}
```
